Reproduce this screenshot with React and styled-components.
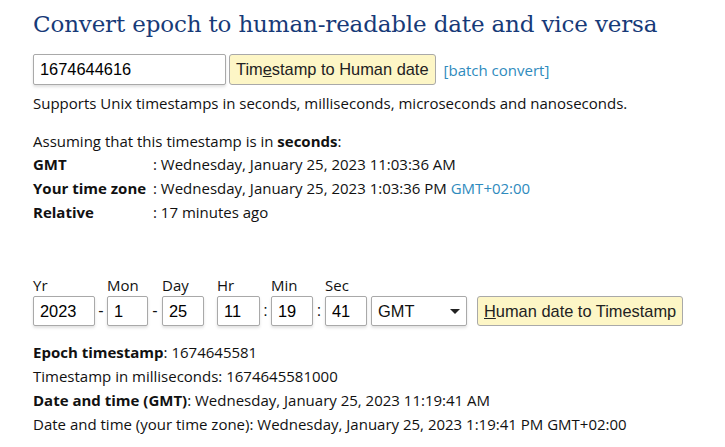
import styled, { createGlobalStyle } from 'styled-components'

const GlobalStyle = createGlobalStyle`
  body {
    margin: 0;
    background: #fff;
    font-family: "Open Sans", "Noto Sans", sans-serif;
    font-size: 15px;
    color: #111;
  }
`

const Page = styled.div`
  padding: 8px 33px 0;
`

const Title = styled.h1`
  margin: 0 0 14px;
  font-family: "DejaVu Serif", serif;
  font-weight: 400;
  font-size: 23px;
  letter-spacing: -0.15px;
  line-height: 32px;
  color: #173a78;
  white-space: nowrap;
`

const Row = styled.div`
  display: flex;
  align-items: ${p => p.$align || 'center'};
  gap: ${p => p.$gap ?? 3}px;
`

const TextInput = styled.input`
  box-sizing: border-box;
  width: ${p => p.$w}px;
  height: ${p => p.$h || 31}px;
  padding: 0 6px;
  border: 1px solid #a9a9a9;
  border-radius: 2px;
  box-shadow: 0 2px 3px rgba(0, 0, 0, 0.12);
  font-family: "Liberation Sans", Arial, sans-serif;
  font-size: 16.4px;
  color: #000;
  background: #fff;
`

const Button = styled.button`
  box-sizing: border-box;
  height: ${p => p.$h || 31}px;
  margin-left: ${p => p.$ml || 0}px;
  padding: 0 6px;
  border: 1px solid #a9a9a9;
  border-radius: 3px;
  background: #fdf6c6;
  font-family: "Liberation Sans", Arial, sans-serif;
  font-size: 16.4px;
  color: #222;
  white-space: nowrap;
  u { text-decoration: underline; }
`

const Link = styled.a`
  margin-left: 5px;
  color: #2f8bbd;
  text-decoration: none;
`

const Note = styled.p`
  margin: 7px 0 0;
  line-height: 22px;
`

const Result = styled.div`
  margin-top: 16px;
  line-height: 22px;
`

const Table = styled.div`
  display: grid;
  grid-template-columns: 120px auto;
  line-height: 24px;
  b { font-weight: 700; }
`

const Zone = styled.span`
  color: #2f8bbd;
`

const DateForm = styled.div`
  margin-top: 51px;
  display: flex;
  align-items: flex-end;
`

const Field = styled.label`
  display: flex;
  flex-direction: column;
  gap: 1px;
`

const FieldName = styled.span`
  line-height: 20px;
`

const Sep = styled.span`
  width: ${p => p.$w}px;
  height: 30px;
  display: flex;
  align-items: center;
  justify-content: center;
  font-family: "Liberation Sans", Arial, sans-serif;
  font-size: 16px;
`

const SelectBox = styled.div`
  box-sizing: border-box;
  width: 96px;
  height: 30px;
  margin-left: 4px;
  padding: 0 6px 0 6px;
  border: 1px solid #a9a9a9;
  border-radius: 2px;
  box-shadow: 0 2px 3px rgba(0, 0, 0, 0.12);
  display: flex;
  align-items: center;
  justify-content: space-between;
  font-family: "Liberation Sans", Arial, sans-serif;
  font-size: 16.4px;
`

const Output = styled.div`
  margin-top: 14px;
  line-height: 24px;
  b { font-weight: 700; }
`

const fields = [
  { name: 'Yr', value: '2023', w: 62, sep: '-', sw: 12 },
  { name: 'Mon', value: '1', w: 41, sep: '-', sw: 14 },
  { name: 'Day', value: '25', w: 42, sep: '', sw: 13 },
  { name: 'Hr', value: '11', w: 43, sep: ':', sw: 11 },
  { name: 'Min', value: '19', w: 42, sep: ':', sw: 12 },
  { name: 'Sec', value: '41', w: 42, sep: null },
]

function App() {
  return (
    <Page>
      <GlobalStyle />
      <Title>Convert epoch to human-readable date and vice versa</Title>
      <Row>
        <TextInput $w={193} defaultValue="1674644616" />
        <Button>Tim<u>e</u>stamp to Human date</Button>
        <Link href="#">[batch convert]</Link>
      </Row>
      <Note>Supports Unix timestamps in seconds, milliseconds, microseconds and nanoseconds.</Note>
      <Result>
        Assuming that this timestamp is in <b>seconds</b>:
        <Table>
          <b>GMT</b><span>: Wednesday, January 25, 2023 11:03:36 AM</span>
          <b>Your time zone</b><span>: Wednesday, January 25, 2023 1:03:36 PM <Zone>GMT+02:00</Zone></span>
          <b>Relative</b><span>: 17 minutes ago</span>
        </Table>
      </Result>
      <DateForm>
        {fields.map(f => (
          <Row key={f.name} $gap={0} $align="flex-end">
            <Field>
              <FieldName>{f.name}</FieldName>
              <TextInput $w={f.w} $h={30} defaultValue={f.value} />
            </Field>
            {f.sep !== null && <Sep $w={f.sw}>{f.sep}</Sep>}
          </Row>
        ))}
        <SelectBox>
          GMT
          <svg width="10" height="5" viewBox="0 0 10 5"><path d="M0 0h10L5 5z" fill="#222" /></svg>
        </SelectBox>
        <Button $h={30} $ml={10}><u>H</u>uman date to Timestamp</Button>
      </DateForm>
      <Output>
        <div><b>Epoch timestamp</b>: 1674645581</div>
        <div>Timestamp in milliseconds: 1674645581000</div>
        <div><b>Date and time (GMT)</b>: Wednesday, January 25, 2023 11:19:41 AM</div>
        <div>Date and time (your time zone): Wednesday, January 25, 2023 1:19:41 PM GMT+02:00</div>
      </Output>
    </Page>
  )
}

export default App
